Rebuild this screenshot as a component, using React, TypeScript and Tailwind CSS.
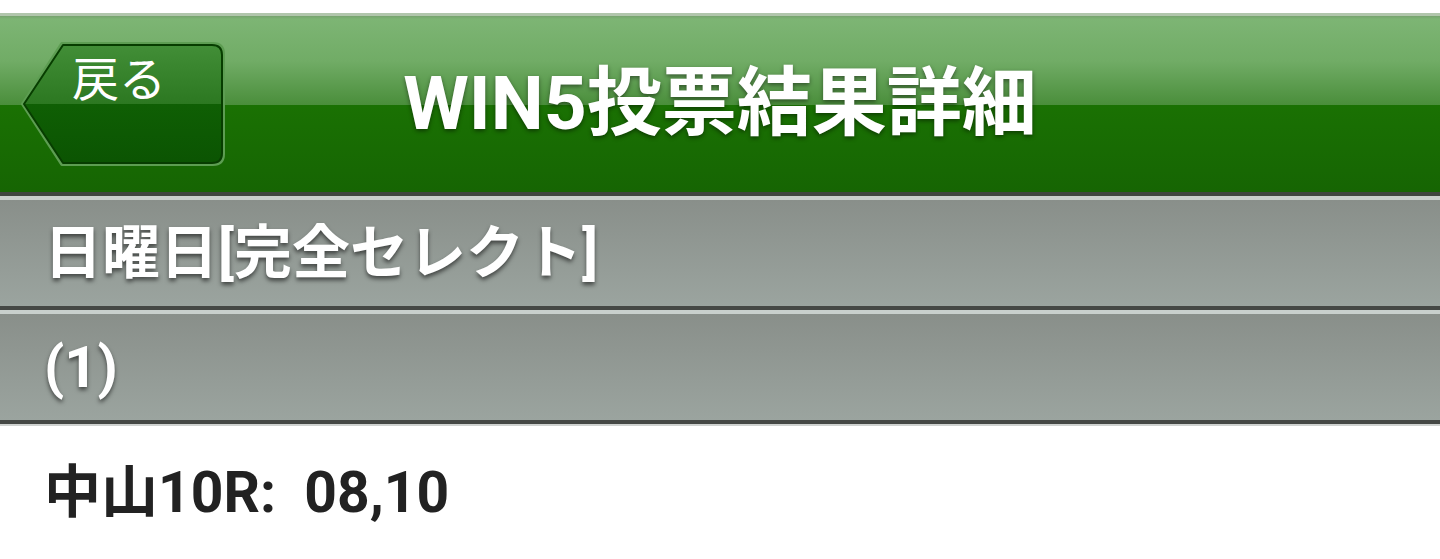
const FONT = '"Roboto", "Noto Sans CJK JP", "Noto Sans", sans-serif';

function BackButton() {
  return (
    <div className="relative w-[204px] h-[124px] ml-[21px] cursor-pointer">
      <svg className="absolute inset-0" width="204" height="124" viewBox="0 0 204 124">
        <defs>
          <linearGradient id="btn" x1="0" y1="0" x2="0" y2="1">
            <stop offset="0" stopColor="#428e37" />
            <stop offset="0.5" stopColor="#2c7821" />
            <stop offset="0.5" stopColor="#0f5f04" />
            <stop offset="1" stopColor="#0b5402" />
          </linearGradient>
        </defs>
        <path
          d="M2 62 L41 2 H192 Q202 2 202 12 V112 Q202 122 192 122 H41 Z"
          fill="none"
          stroke="#5d9d52"
          strokeWidth="4"
          strokeLinejoin="round"
        />
        <path
          d="M3 62 L42 3 H191 Q201 3 201 13 V111 Q201 121 191 121 H42 Z"
          fill="url(#btn)"
          stroke="#073d00"
          strokeWidth="2"
          strokeLinejoin="round"
        />
      </svg>
      <span className="relative block pl-[51px] pt-[14px] text-[47px] leading-none text-white">
        戻る
      </span>
    </div>
  );
}

function GrayRow({ children }: { children: React.ReactNode }) {
  return (
    <div className="border-t-4 border-b-4 border-t-[#c8cfcc] border-b-[#454845]">
      <div className="h-[106px] flex items-center pl-[44px] bg-[linear-gradient(to_bottom,#898f8a,#9ba49f)]">
        <span className="text-[58px] font-bold text-white leading-none [text-shadow:0_3px_4px_rgba(0,0,0,0.55)]">
          {children}
        </span>
      </div>
    </div>
  );
}

export default function App() {
  return (
    <div className="w-[1440px] h-[559px] bg-white overflow-hidden" style={{ fontFamily: FONT }}>
      <div className="pt-[13px]">
        <header className="border-t-[3px] border-t-[#b1c6ac] border-b-4 border-b-[#3f463f]">
          <div className="h-[176px] grid grid-cols-[1fr_auto_1fr] items-center bg-[linear-gradient(to_bottom,#76a26e_0px,#7db574_3px,#71ac66_45px,#4a8e3b_89px,#1a7103_89px,#166503_100%)]">
            <div className="flex items-center">
              <BackButton />
            </div>
            <h1 className="text-[75px] font-bold text-white leading-none pb-[2px] [text-shadow:0_2px_4px_rgba(0,0,0,0.45)]">
              WIN5投票結果詳細
            </h1>
            <div />
          </div>
        </header>
        <GrayRow>日曜日[完全セレクト]</GrayRow>
        <GrayRow>(1)</GrayRow>
        <div className="h-[2px] bg-[#cfd2d0]" />
        <div className="h-[133px] flex items-center pl-[44px]">
          <span className="text-[57px] font-bold text-[#222222] leading-none">
            中山10R:{"\u00a0\u00a0"}08,10
          </span>
        </div>
      </div>
    </div>
  );
}
